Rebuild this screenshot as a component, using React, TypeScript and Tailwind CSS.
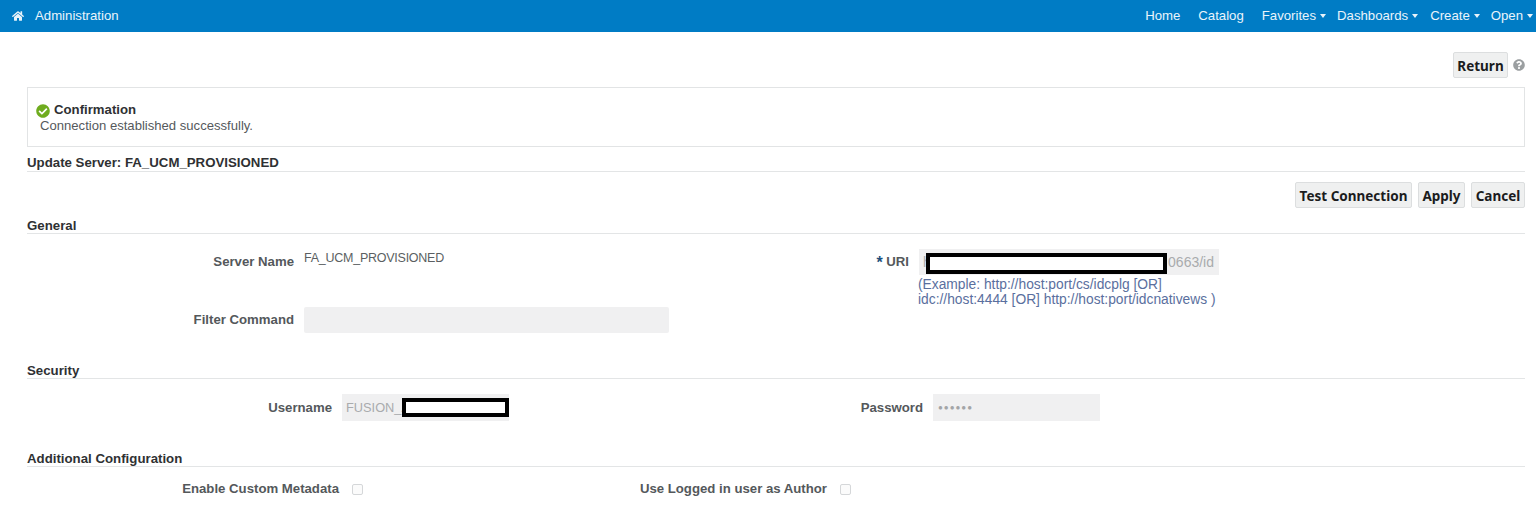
import React from "react";
import { FaHome, FaCheckCircle, FaQuestionCircle } from "react-icons/fa";

function Caret() {
  return <span className="ml-[4px] inline-block h-0 w-0 border-x-[3px] border-t-[4px] border-x-transparent border-t-[#e8f3fa]" />;
}

function NavItem({ label, menu, className }: { label: string; menu?: boolean; className: string }) {
  return (
    <span className={"flex items-center whitespace-nowrap " + className}>
      {label}
      {menu && <Caret />}
    </span>
  );
}

function Btn({ label, className }: { label: string; className: string }) {
  return (
    <button className={"flex h-[26px] items-center justify-center rounded-[2px] border border-[#dcdedf] bg-[#eff0f0] pt-[2px] font-['Noto_Sans',sans-serif] text-[13.5px] font-bold text-[#1b1c1d] " + className}>
      {label}
    </button>
  );
}

function SectionTitle({ label, className }: { label: string; className: string }) {
  return (
    <div className={"border-b border-[#e3e5e6] text-[13.25px] leading-[15px] font-bold text-[#2f3133] " + className}>
      {label}
    </div>
  );
}

function Label({ children, className }: { children: React.ReactNode; className: string }) {
  return <span className={"text-right text-[13.2px] leading-4 font-bold whitespace-nowrap text-[#54585b] " + className}>{children}</span>;
}

function Redact({ className }: { className: string }) {
  return <div className={"absolute border-[4px] border-black bg-white " + className} />;
}

function Check({ className }: { className: string }) {
  return <span className={"h-[11px] w-[11px] rounded-[2px] border border-[#d5d7d9] bg-[#fbfbfb] " + className} />;
}

export default function App() {
  return (
    <div className="h-[522px] w-[1536px] overflow-hidden bg-white font-['Liberation_Sans',Arial,sans-serif]">
      <header className="flex h-[32px] items-center justify-between bg-[#007cc5] text-[13.2px] text-[#eaf4fb]">
        <div className="flex items-center">
          <FaHome className="ml-[12px] h-[12px] w-[12px] text-[#e8f3fa]" />
          <span className="ml-[11px]">Administration</span>
        </div>
        <nav className="mr-[3px] flex items-center">
          <NavItem label="Home" className="mr-[18px]" />
          <NavItem label="Catalog" className="mr-[18px]" />
          <NavItem label="Favorites" menu className="mr-[11px]" />
          <NavItem label="Dashboards" menu className="mr-[12px]" />
          <NavItem label="Create" menu className="mr-[11px]" />
          <NavItem label="Open" menu className="" />
        </nav>
      </header>

      <main className="pr-[11px] pl-[27px]">
        <div className="flex h-[55px] items-end justify-end pb-[9px]">
          <Btn label="Return" className="w-[55px]" />
          <FaQuestionCircle className="mb-[7px] ml-[5px] h-[12px] w-[12px] text-[#9b9fa1]" />
        </div>

        <section className="h-[60px] border border-[#e2e4e5] pt-[14px] pl-[8px]">
          <div className="flex items-center text-[13.2px] leading-4 font-bold text-[#2f3133]">
            <FaCheckCircle className="mt-[2px] mr-[4px] h-[14px] w-[14px] text-[#6fac1f]" />
            Confirmation
          </div>
          <div className="pl-[4px] text-[13.1px] leading-4 text-[#55595c]">Connection established successfully.</div>
        </section>

        <SectionTitle label="Update Server: FA_UCM_PROVISIONED" className="mt-[8px] h-[17px]" />

        <div className="mt-[10px] flex justify-end gap-[6px]">
          <Btn label="Test Connection" className="w-[117px]" />
          <Btn label="Apply" className="w-[47px]" />
          <Btn label="Cancel" className="w-[54px]" />
        </div>

        <SectionTitle label="General" className="mt-[10px] h-[16px]" />

        <div className="relative h-[129px]">
          <div className="flex items-start pt-[15px]">
            <div className="flex w-[642px] flex-col">
              <div className="flex h-[58px] items-start">
                <Label className="mt-[5px] w-[267px]">Server Name</Label>
                <span className="mt-[1px] ml-[10px] text-[12.5px] leading-4 tracking-[-0.25px] text-[#5b5f62]">FA_UCM_PROVISIONED</span>
              </div>
              <div className="flex items-center">
                <Label className="w-[267px]">Filter Command</Label>
                <div className="ml-[10px] h-[26px] w-[365px] rounded-[2px] bg-[#f0f0f1]" />
              </div>
            </div>
            <div className="flex items-start">
              <Label className="mt-[5px] w-[240px]">
                <span className="align-middle text-[16px] leading-none text-[#1d4f7c]">*</span> URI
              </Label>
              <div className="ml-[10px] w-[300px]">
                <div className="flex h-[26px] items-center justify-between overflow-hidden bg-[#f0f0f1] pr-[5px] pl-[4px] text-[14px] whitespace-nowrap text-[#a9abad]">
                  <span>h</span>
                  <span>0663/id</span>
                </div>
                <div className="mt-[2px] -ml-[1px] text-[13.8px] leading-[15px] whitespace-nowrap text-[#5a6f9e]">
                  (Example: http://host:port/cs/idcplg [OR]
                  <br />
                  idc://host:4444 [OR] http://host:port/idcnativews )
                </div>
              </div>
            </div>
          </div>
          <Redact className="top-[19px] left-[899px] h-[21px] w-[241px]" />
        </div>

        <SectionTitle label="Security" className="h-[16px]" />

        <div className="relative flex h-[72px] items-start pt-[15px]">
          <div className="flex w-[642px] items-center">
            <Label className="w-[305px]">Username</Label>
            <div className="ml-[10px] flex h-[27px] w-[167px] items-center bg-[#f0f0f1] pt-[1px] pl-[4px] text-[12.8px] text-[#a9abad]">FUSION_A</div>
          </div>
          <div className="flex items-center">
            <Label className="w-[254px]">Password</Label>
            <div className="ml-[10px] flex h-[27px] w-[167px] items-center bg-[#f0f0f1] pl-[5px] text-[8px] tracking-[1px] text-[#a3a5a7]">●●●●●●</div>
          </div>
          <Redact className="top-[19px] left-[375px] h-[19px] w-[107px]" />
        </div>

        <SectionTitle label="Additional Configuration" className="h-[16px]" />

        <div className="flex items-center pt-[14px]">
          <div className="flex w-[600px] items-center">
            <Label className="w-[312px]">Enable Custom Metadata</Label>
            <Check className="ml-[13px]" />
          </div>
          <div className="flex items-center">
            <Label className="w-[200px]">Use Logged in user as Author</Label>
            <Check className="ml-[13px]" />
          </div>
        </div>
      </main>
    </div>
  );
}
